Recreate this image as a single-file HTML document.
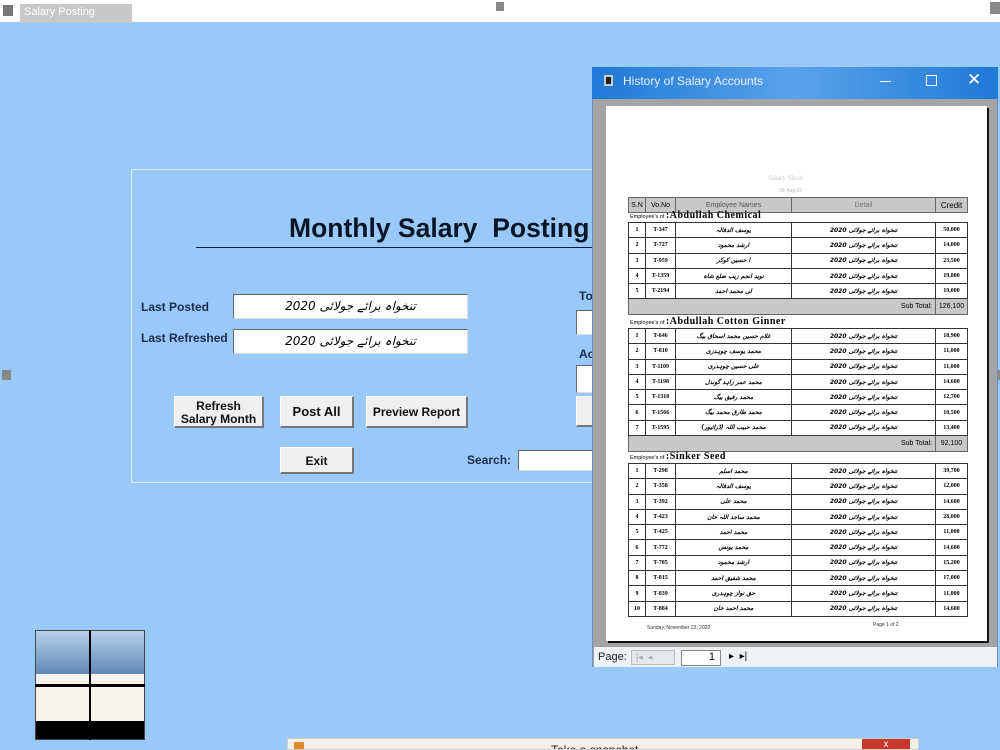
<!DOCTYPE html>
<html style="overflow:hidden;width:1000px;height:750px"><head><meta charset="utf-8"><style>
*{margin:0;padding:0;box-sizing:border-box}
body{width:1000px;height:750px;overflow:hidden;background:#99c9f8;font-family:"Liberation Sans",sans-serif;position:relative}
.a{position:absolute}
.btn{position:absolute;background:#efefef;border:1px solid #fff;border-right:2px solid #777;border-bottom:2px solid #777;font-weight:bold;color:#111;text-align:center;font-size:12px;font-family:"Liberation Sans",sans-serif;white-space:nowrap}
.box{position:absolute;background:#fff;border:1px solid #666;border-right-color:#ddd;border-bottom-color:#ddd}
.lbl{position:absolute;font-weight:bold;font-size:12px;color:#1b2d4a;font-family:"Liberation Sans",sans-serif;white-space:nowrap}
table{position:absolute;left:628px;width:339px;border-collapse:collapse;table-layout:fixed;font-size:6px;font-weight:bold;font-family:"Liberation Serif",serif}
td{border:1px solid #333;height:15.3px;text-align:center;white-space:nowrap;overflow:hidden}
td.u{font-family:"DejaVu Sans",sans-serif;font-style:italic;font-size:6px}
td.r{text-align:right;padding-right:3px}
.st td{background:#c8c8c8;border-color:#666;height:16px;font-family:"Liberation Sans",sans-serif;font-weight:normal;font-size:7px}
.gl{position:absolute;left:630px;font-size:10px;font-family:"Liberation Serif",serif;font-weight:bold;letter-spacing:.5px;line-height:11px}
.gl small{font-size:5.5px;font-family:"Liberation Sans",sans-serif;font-weight:normal;letter-spacing:0}
.ur{font-size:12px;text-align:center;line-height:23px;font-family:"DejaVu Sans",sans-serif;font-style:italic}
</style></head><body>
<div class="a" style="left:0;top:0;width:1000px;height:22px;background:#fff"></div>
<div class="a" style="left:3px;top:5px;width:10px;height:11px;background:#777"></div>
<div class="a" style="left:20px;top:4px;width:112px;height:19px;background:#c8c8c8;color:#fff;font-size:11px;padding:2px 4px">Salary Posting</div>
<div class="a" style="left:496px;top:2px;width:8px;height:9px;background:#888"></div>
<div class="a" style="left:990px;top:2px;width:10px;height:12px;background:#888"></div>
<div class="a" style="left:2px;top:370px;width:9px;height:10px;background:#888"></div>
<div class="a" style="left:990px;top:370px;width:10px;height:10px;background:#888"></div>

<div class="a" style="left:131px;top:169px;width:480px;height:314px;border:1px solid #dceeff"></div>
<div class="a" style="left:289px;top:213px;font-size:26.5px;font-weight:bold;color:#0c1428;white-space:nowrap">Monthly Salary&nbsp; Posting</div>
<div class="a" style="left:196px;top:247px;width:400px;height:1px;background:#0a1a40"></div>
<div class="lbl" style="left:141px;top:300px">Last Posted</div>
<div class="lbl" style="left:141px;top:331px">Last Refreshed</div>
<div class="box ur" style="left:233px;top:294px;width:235px;height:25px">2020 تنخواہ برائے جولائی</div>
<div class="box ur" style="left:233px;top:329px;width:235px;height:25px">2020 تنخواہ برائے جولائی</div>
<div class="lbl" style="left:579px;top:289px">To</div>
<div class="lbl" style="left:579px;top:347px">Ac</div>
<div class="box" style="left:576px;top:310px;width:20px;height:25px"></div>
<div class="box" style="left:576px;top:365px;width:20px;height:28px"></div>
<div class="btn" style="left:576px;top:396px;width:20px;height:31px"></div>
<div class="btn" style="left:174px;top:396px;width:90px;height:32px;line-height:13px;padding-top:3px">Refresh<br>Salary Month</div>
<div class="btn" style="left:280px;top:396px;width:74px;height:32px;line-height:30px;font-size:13px">Post All</div>
<div class="btn" style="left:366px;top:396px;width:102px;height:32px;line-height:30px;font-size:12px">Preview Report</div>
<div class="btn" style="left:280px;top:447px;width:74px;height:27px;line-height:26px;font-size:12px">Exit</div>
<div class="lbl" style="left:467px;top:453px">Search:</div>
<div class="box" style="left:518px;top:450px;width:80px;height:21px"></div>

<!-- report window -->
<div class="a" style="left:592px;top:67px;width:406px;height:600px;background:#a4a4a4;border:1px solid #6a8fc0"></div>
<div class="a" style="left:592px;top:67px;width:406px;height:32px;background:linear-gradient(90deg,#1f79d6,#5aa2ec 50%,#1f79d6 100%)"></div>
<div class="a" style="left:604px;top:75px;width:9px;height:11px;background:#222;border:2px solid #ccc"></div>
<div class="a" style="left:623px;top:74px;color:#e6f0ff;font-size:12px">History of Salary Accounts</div>
<div class="a" style="left:880px;top:81px;width:11px;height:1px;background:#fff"></div>
<div class="a" style="left:926px;top:75px;width:11px;height:11px;border:1px solid #fff"></div>
<div class="a" style="left:967px;top:70px;color:#fff;font-size:17px">✕</div>
<div class="a" style="left:606px;top:106px;width:381px;height:535px;background:#fff;box-shadow:2px 2px 0 #111"></div>
<div class="a" style="left:594px;top:647px;width:403px;height:20px;background:#eef2f6"></div>
<div class="a" style="left:598px;top:651px;font-size:11px;color:#222">Page:</div>
<div class="a" style="left:631px;top:650px;width:44px;height:15px;background:#e4e8ec;border:1px solid #bbb;color:#aaa;font-size:9px;line-height:13px;padding-left:4px">|◂ &nbsp;◂</div>
<div class="a" style="left:681px;top:650px;width:40px;height:16px;background:#fff;border:1px solid #888;font-size:11px;text-align:right;padding-right:5px">1</div>
<div class="a" style="left:724px;top:650px;width:44px;height:15px;color:#000;font-size:10px;line-height:14px;padding-left:5px">▸ &nbsp;▸|</div>

<div class="a" style="left:768px;top:174px;font-size:7px;color:#ccc;font-family:'Liberation Serif',serif">Salary Sheet</div>
<div class="a" style="left:779px;top:188px;font-size:5px;color:#bbb">09-Aug-20</div>

<table style="top:197px;font-family:'Liberation Sans',sans-serif;font-weight:normal"><colgroup><col style="width:17px"><col style="width:30px"><col style="width:116px"><col style="width:144px"><col style="width:32px"></colgroup>
<tr style="background:#c8c8c8"><td style="height:12px;font-size:7px;border-color:#666">S.N</td><td style="font-size:7px;border-color:#666">Vo.No</td><td style="font-size:7px;color:#555;border-color:#666">Employee Names</td><td style="font-size:7px;color:#777;border-color:#666">Detail</td><td style="font-size:8px;border-color:#666">Credit</td></tr></table>
<div class="gl" style="top:210px"><small>Employee's of </small>:Abdullah Chemical</div>
<table style="top:222px"><colgroup><col style="width:17px"><col style="width:30px"><col style="width:116px"><col style="width:144px"><col style="width:32px"></colgroup>
<tr><td>1</td><td>T-347</td><td class="u">یوسف الدفالہ</td><td class="u">تنخواہ برائے جولائی 2020</td><td>50,000</td></tr>
<tr><td>2</td><td>T-727</td><td class="u">ارشد محمود</td><td class="u">تنخواہ برائے جولائی 2020</td><td>14,000</td></tr>
<tr><td>3</td><td>T-959</td><td class="u">ا حسین کوکر</td><td class="u">تنخواہ برائے جولائی 2020</td><td>23,500</td></tr>
<tr><td>4</td><td>T-1359</td><td class="u">نوید انجم زیب ضلع شاہ</td><td class="u">تنخواہ برائے جولائی 2020</td><td>19,800</td></tr>
<tr><td>5</td><td>T-2194</td><td class="u">لی محمد احمد</td><td class="u">تنخواہ برائے جولائی 2020</td><td>19,000</td></tr>
<tr class="st"><td colspan="4" class="r">Sub Total:</td><td>126,100</td></tr></table>
<div class="gl" style="top:316px"><small>Employee's of </small>:Abdullah Cotton Ginner</div>
<table style="top:328px"><colgroup><col style="width:17px"><col style="width:30px"><col style="width:116px"><col style="width:144px"><col style="width:32px"></colgroup>
<tr><td>1</td><td>T-646</td><td class="u">غلام حسین محمد اسحاق بیگ</td><td class="u">تنخواہ برائے جولائی 2020</td><td>18,900</td></tr>
<tr><td>2</td><td>T-810</td><td class="u">محمد یوسف چوہدری</td><td class="u">تنخواہ برائے جولائی 2020</td><td>11,000</td></tr>
<tr><td>3</td><td>T-1109</td><td class="u">علی حسین چوہدری</td><td class="u">تنخواہ برائے جولائی 2020</td><td>11,000</td></tr>
<tr><td>4</td><td>T-1198</td><td class="u">محمد عمر زاہد گوندل</td><td class="u">تنخواہ برائے جولائی 2020</td><td>14,600</td></tr>
<tr><td>5</td><td>T-1318</td><td class="u">محمد رفیق بیگ</td><td class="u">تنخواہ برائے جولائی 2020</td><td>12,700</td></tr>
<tr><td>6</td><td>T-1566</td><td class="u">محمد طارق محمد بیگ</td><td class="u">تنخواہ برائے جولائی 2020</td><td>10,500</td></tr>
<tr><td>7</td><td>T-1595</td><td class="u">محمد حبیب اللہ (ڈرائیور)</td><td class="u">تنخواہ برائے جولائی 2020</td><td>13,400</td></tr>
<tr class="st"><td colspan="4" class="r">Sub Total:</td><td>92,100</td></tr></table>
<div class="gl" style="top:451px"><small>Employee's of </small>:Sinker Seed</div>
<table style="top:463px"><colgroup><col style="width:17px"><col style="width:30px"><col style="width:116px"><col style="width:144px"><col style="width:32px"></colgroup>
<tr><td>1</td><td>T-298</td><td class="u">محمد اسلم</td><td class="u">تنخواہ برائے جولائی 2020</td><td>39,700</td></tr>
<tr><td>2</td><td>T-358</td><td class="u">یوسف الدفالہ</td><td class="u">تنخواہ برائے جولائی 2020</td><td>12,000</td></tr>
<tr><td>3</td><td>T-392</td><td class="u">محمد علی</td><td class="u">تنخواہ برائے جولائی 2020</td><td>14,600</td></tr>
<tr><td>4</td><td>T-423</td><td class="u">محمد ساجد اللہ خان</td><td class="u">تنخواہ برائے جولائی 2020</td><td>28,000</td></tr>
<tr><td>5</td><td>T-425</td><td class="u">محمد احمد</td><td class="u">تنخواہ برائے جولائی 2020</td><td>11,000</td></tr>
<tr><td>6</td><td>T-772</td><td class="u">محمد یونس</td><td class="u">تنخواہ برائے جولائی 2020</td><td>14,600</td></tr>
<tr><td>7</td><td>T-785</td><td class="u">ارشد محمود</td><td class="u">تنخواہ برائے جولائی 2020</td><td>15,200</td></tr>
<tr><td>8</td><td>T-815</td><td class="u">محمد شفیق احمد</td><td class="u">تنخواہ برائے جولائی 2020</td><td>17,000</td></tr>
<tr><td>9</td><td>T-839</td><td class="u">حق نواز چوہدری</td><td class="u">تنخواہ برائے جولائی 2020</td><td>11,000</td></tr>
<tr><td>10</td><td>T-884</td><td class="u">محمد احمد خان</td><td class="u">تنخواہ برائے جولائی 2020</td><td>14,600</td></tr></table>
<div class="a" style="left:647px;top:625px;font-size:5px;color:#333">Sunday, November 22, 2020</div>
<div class="a" style="left:873px;top:622px;font-size:5px;color:#333">Page 1 of 2</div>

<!-- bottom-left icon -->
<div class="a" style="left:35px;top:630px;width:110px;height:110px;background:#f8f4ec;border:1px solid #444"></div>
<div class="a" style="left:36px;top:631px;width:108px;height:43px;background:linear-gradient(#b7d0ea,#5f8ab8)"></div>
<div class="a" style="left:89px;top:630px;width:2px;height:110px;background:#000"></div>
<div class="a" style="left:35px;top:684px;width:110px;height:3px;background:#000"></div>
<div class="a" style="left:36px;top:721px;width:108px;height:18px;background:#000"></div>

<!-- bottom dialog -->
<div class="a" style="left:287px;top:738px;width:632px;height:12px;background:#f4f0e8;border:1px solid #ccc;overflow:hidden">
<div class="a" style="left:6px;top:3px;width:10px;height:8px;background:#e08a30"></div>
<div class="a" style="left:263px;top:4px;font-size:12px;color:#222;white-space:nowrap">Take a snapshot</div>
<div class="a" style="left:574px;top:0;width:48px;height:12px;background:#c8362c;color:#fff;text-align:center;font-size:10px">x</div>
</div>
</body></html>
